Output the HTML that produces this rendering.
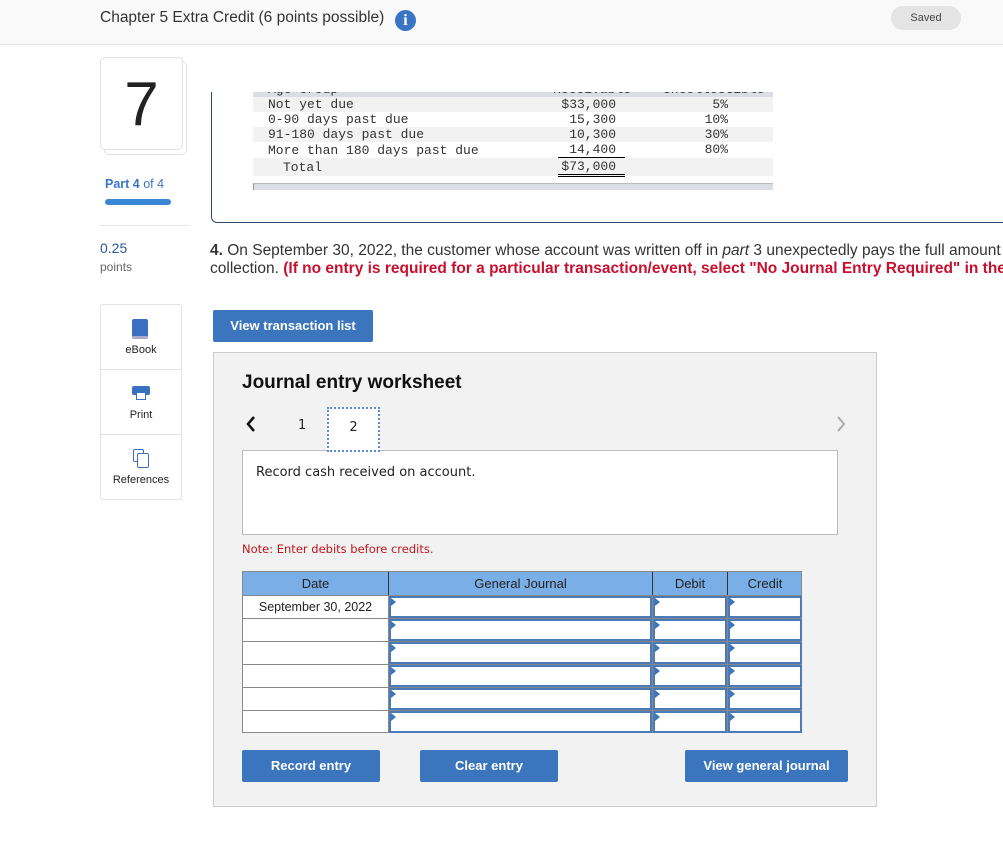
<!DOCTYPE html>
<html><head><meta charset="utf-8"><style>
*{box-sizing:border-box;margin:0;padding:0}
body{width:1003px;height:850px;overflow:hidden;background:#fff;font-family:"Liberation Sans",sans-serif;position:relative;color:#222}
.a{position:absolute}
.mono{font-family:"Liberation Mono",monospace;font-size:13px;color:#333}
.btn{position:absolute;background:#3a75be;color:#fff;font-weight:bold;font-size:13px;text-align:center;border-radius:2px}
.in{position:absolute;border:2px solid #4a7ab8;background:#fff}
.in:before{content:"";position:absolute;left:0;top:0;border-left:5px solid #3a75be;border-top:4px solid transparent;border-bottom:4px solid transparent}
</style></head><body>
<div class="a" style="left:0;top:0;width:1003px;height:45px;background:#f9f9f9;border-bottom:1px solid #e6e6e6"></div>
<div class="a" style="left:100px;top:9px;font-size:15.5px;color:#333">Chapter 5 Extra Credit (6 points possible)</div>
<div class="a" style="left:395px;top:10px;width:21px;height:21px;border-radius:50%;background:#3a75c4;color:#fff;font-weight:bold;font-family:'Liberation Serif',serif;font-size:16px;text-align:center;line-height:21px">i</div>
<div class="a" style="left:891px;top:6px;width:70px;height:24px;border-radius:12px;background:#e4e4e4;font-size:11px;color:#444;text-align:center;line-height:24px">Saved</div>

<div class="a" style="left:104px;top:61px;width:83px;height:94px;border:1px solid #e2e2e2;border-radius:5px"></div>
<div class="a" style="left:100px;top:57px;width:83px;height:93px;border:1px solid #e2e2e2;border-radius:5px;background:#fff;font-size:62px;text-align:center;line-height:93px;color:#222">7</div>
<div class="a" style="left:105px;top:177px;font-size:12.5px;color:#3a75c4"><b>Part 4</b> of 4</div>
<div class="a" style="left:105px;top:199px;width:66px;height:6px;border-radius:3px;background:#3a86d6"></div>
<div class="a" style="left:100px;top:225px;width:90px;height:1px;background:#e6e6e6"></div>
<div class="a" style="left:100px;top:240px;font-size:14px;color:#2a5a9a">0.25</div>
<div class="a" style="left:100px;top:260px;font-size:12px;color:#666">points</div>
<div class="a" style="left:100px;top:304px;width:82px;height:196px;border:1px solid #e2e2e2;border-radius:3px"></div>
<div class="a" style="left:101px;top:369px;width:80px;height:1px;background:#e2e2e2"></div>
<div class="a" style="left:101px;top:434px;width:80px;height:1px;background:#e2e2e2"></div>
<div class="a" style="left:132px;top:319px;width:16px;height:20px;background:#3a70c0;border-radius:2px;border-bottom:3px solid #aac"></div>
<div class="a" style="left:100px;top:344px;width:82px;text-align:center;font-size:11px">eBook</div>
<div class="a" style="left:132px;top:386px;width:18px;height:9px;background:#3a70c0;border-radius:2px"></div>
<div class="a" style="left:136px;top:392px;width:10px;height:8px;background:#fff;border:1px solid #3a70c0"></div>
<div class="a" style="left:100px;top:409px;width:82px;text-align:center;font-size:11px">Print</div>
<div class="a" style="left:133px;top:449px;width:11px;height:13px;border:1.5px solid #3a70c0;border-radius:2px"></div>
<div class="a" style="left:137px;top:453px;width:12px;height:15px;border:1.5px solid #3a70c0;border-radius:2px;background:#fff"></div>
<div class="a" style="left:100px;top:474px;width:82px;text-align:center;font-size:11px">References</div>

<div class="a" style="left:211px;top:92px;width:800px;height:131px;border-left:1.5px solid #2a4a70;border-bottom:1.5px solid #2a4a70;border-bottom-left-radius:6px"></div>
<div class="a" style="left:253px;top:92px;width:520px;height:5px;background:#dadde6;overflow:hidden"><div class="mono" style="position:absolute;left:15px;top:-10px">Age Group</div><div class="mono" style="position:absolute;left:300px;top:-10px">Receivable</div><div class="mono" style="position:absolute;left:410px;top:-10px">Uncollectible</div></div>
<div class="a" style="left:253px;top:97px;width:520px;height:15px;background:#f2f2f2"></div>
<div class="a" style="left:253px;top:127px;width:520px;height:15px;background:#f2f2f2"></div>
<div class="a" style="left:253px;top:158px;width:520px;height:18px;background:#f2f2f2"></div>
<div class="a mono" style="left:268px;top:97px;line-height:15px">Not yet due<br>0-90 days past due<br>91-180 days past due<br><span style="line-height:17px">More than 180 days past due</span></div>
<div class="a mono" style="left:283px;top:160px">Total</div>
<div class="a mono" style="left:530px;top:97px;width:86px;text-align:right;line-height:15px">$33,000<br>15,300<br>10,300<br>14,400</div>
<div class="a" style="left:558px;top:157px;width:67px;height:1px;background:#000"></div>
<div class="a mono" style="left:530px;top:159px;width:86px;text-align:right">$73,000</div>
<div class="a" style="left:558px;top:174px;width:67px;height:3px;border-top:1px solid #000;border-bottom:1px solid #000"></div>
<div class="a mono" style="left:680px;top:97px;width:48px;text-align:right;line-height:15px">5%<br>10%<br>30%<br>80%</div>
<div class="a" style="left:253px;top:183px;width:520px;height:7px;background:#dadde6;border-left:1px solid #999;border-top:1px solid #bbb"></div>

<div class="a" style="left:210px;top:242px;font-size:15.5px;line-height:18px;white-space:nowrap;color:#333"><b>4.</b> On September 30, 2022, the customer whose account was written off in <i>part</i> 3 unexpectedly pays the full amount<br>collection. <b style="color:#c8102e">(If no entry is required for a particular transaction/event, select "No Journal Entry Required" in the first</b></div>
<div class="btn" style="left:213px;top:310px;width:160px;height:32px;line-height:32px">View transaction list</div>

<div class="a" style="left:213px;top:352px;width:664px;height:455px;background:#f2f2f2;border:1px solid #ccc"></div>
<div class="a" style="left:242px;top:372px;font-size:19px;font-weight:bold;color:#111">Journal entry worksheet</div>
<svg class="a" style="left:244px;top:415px" width="14" height="18"><path d="M10 2 L4 9 L10 16" stroke="#111" stroke-width="2.5" fill="none"/></svg>
<svg class="a" style="left:834px;top:415px" width="14" height="18"><path d="M4 2 L10 9 L4 16" stroke="#aaa" stroke-width="2" fill="none"/></svg>
<div class="a" style="left:298px;top:418px;font-size:13px;font-family:'DejaVu Sans',sans-serif">1</div>
<div class="a" style="left:242px;top:450px;width:596px;height:85px;background:#fff;border:1px solid #bbb"></div>
<div class="a" style="left:327px;top:407px;width:53px;height:45px;background:#fff;border:2px dotted #5a8ad0;font-size:13px;text-align:center;line-height:38px;font-family:'DejaVu Sans',sans-serif">2</div>
<div class="a" style="left:256px;top:465px;font-size:13px;font-family:'DejaVu Sans',sans-serif">Record cash received on account.</div>
<div class="a" style="left:242px;top:542px;font-size:11.5px;color:#c0141c;font-family:'DejaVu Sans',sans-serif">Note: Enter debits before credits.</div>

<div class="a" style="left:242px;top:571px;width:560px;height:162px;background:#888"></div>
<div class="a" style="left:243px;top:572px;width:558px;height:23px;background:#7aaee6"></div>
<div class="a" style="left:388px;top:572px;width:1px;height:23px;background:#333"></div>
<div class="a" style="left:652px;top:572px;width:1px;height:23px;background:#333"></div>
<div class="a" style="left:727px;top:572px;width:1px;height:23px;background:#333"></div>
<div class="a" style="left:243px;top:576px;width:145px;text-align:center;font-size:13px">Date</div>
<div class="a" style="left:389px;top:576px;width:263px;text-align:center;font-size:13px">General Journal</div>
<div class="a" style="left:653px;top:576px;width:74px;text-align:center;font-size:13px">Debit</div>
<div class="a" style="left:728px;top:576px;width:74px;text-align:center;font-size:13px">Credit</div>
<div class="a" style="left:243px;top:596px;width:145px;height:22px;background:#fff;font-size:12.5px;text-align:center;line-height:22px">September 30, 2022</div>
<div class="a" style="left:243px;top:619px;width:145px;height:22px;background:#fff"></div>
<div class="a" style="left:243px;top:642px;width:145px;height:22px;background:#fff"></div>
<div class="a" style="left:243px;top:665px;width:145px;height:22px;background:#fff"></div>
<div class="a" style="left:243px;top:688px;width:145px;height:22px;background:#fff"></div>
<div class="a" style="left:243px;top:711px;width:145px;height:21px;background:#fff"></div>
<div class="in" style="left:389px;top:596px;width:263px;height:22px"></div><div class="in" style="left:653px;top:596px;width:74px;height:22px"></div><div class="in" style="left:728px;top:596px;width:74px;height:22px"></div>
<div class="in" style="left:389px;top:619px;width:263px;height:22px"></div><div class="in" style="left:653px;top:619px;width:74px;height:22px"></div><div class="in" style="left:728px;top:619px;width:74px;height:22px"></div>
<div class="in" style="left:389px;top:642px;width:263px;height:22px"></div><div class="in" style="left:653px;top:642px;width:74px;height:22px"></div><div class="in" style="left:728px;top:642px;width:74px;height:22px"></div>
<div class="in" style="left:389px;top:665px;width:263px;height:22px"></div><div class="in" style="left:653px;top:665px;width:74px;height:22px"></div><div class="in" style="left:728px;top:665px;width:74px;height:22px"></div>
<div class="in" style="left:389px;top:688px;width:263px;height:22px"></div><div class="in" style="left:653px;top:688px;width:74px;height:22px"></div><div class="in" style="left:728px;top:688px;width:74px;height:22px"></div>
<div class="in" style="left:389px;top:711px;width:263px;height:22px"></div><div class="in" style="left:653px;top:711px;width:74px;height:22px"></div><div class="in" style="left:728px;top:711px;width:74px;height:22px"></div>

<div class="btn" style="left:242px;top:750px;width:138px;height:32px;line-height:32px">Record entry</div>
<div class="btn" style="left:420px;top:750px;width:138px;height:32px;line-height:32px">Clear entry</div>
<div class="btn" style="left:685px;top:750px;width:163px;height:32px;line-height:32px">View general journal</div>
</body></html>
